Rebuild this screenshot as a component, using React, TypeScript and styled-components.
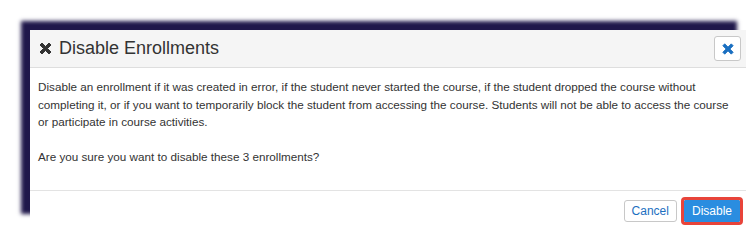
import React from "react";
import styled, { createGlobalStyle } from "styled-components";

const Global = createGlobalStyle`
  html, body { margin: 0; padding: 0; background: #ffffff; overflow: hidden; }
  body { font-family: "Liberation Sans", Arial, sans-serif; }
`;

const Stage = styled.div`
  width: 746px;
  height: 229px;
  padding: 30px 0 0 30px;
  box-sizing: border-box;
  overflow: hidden;
`;

const Panel = styled.div`
  width: 716px;
  height: 193px;
  background: #fff;
  box-shadow: -9px -9px 4px #1f174a;
  display: flex;
  flex-direction: column;
`;

const Header = styled.div`
  height: 37px;
  background: #f5f5f5;
  border-bottom: 1px solid #dedede;
  display: flex;
  align-items: center;
  justify-content: space-between;
  padding: 0 5px 0 8px;
`;

const Title = styled.h2`
  margin: 0;
  font-size: 18px;
  font-weight: normal;
  color: #333;
  display: flex;
  align-items: center;
  gap: 6px;
`;

const CloseButton = styled.button`
  width: 27px;
  height: 25px;
  border: 1px solid #c8c8c8;
  border-radius: 3px;
  background: #fff;
  display: flex;
  align-items: center;
  justify-content: center;
  padding: 0;
`;

const Body = styled.div`
  flex: 1;
  padding: 10px 8px 0 8px;
  font-size: 11.7px;
  line-height: 17.5px;
  color: #333;
`;

const Para = styled.p`
  margin: 0 0 17.5px 0;
  white-space: nowrap;
`;

const Footer = styled.div`
  height: 33px;
  box-sizing: border-box;
  border-top: 1px solid #e3e3e3;
  display: flex;
  justify-content: flex-end;
  align-items: flex-start;
  gap: 7px;
  padding: 9px 6px 0 0;
`;

const Button = styled.button<{ $primary?: boolean }>`
  height: 22px;
  padding: 0 ${(p) => (p.$primary ? "7px" : "7px")};
  font-family: "Liberation Sans", Arial, sans-serif;
  font-size: 12px;
  border-radius: ${(p) => (p.$primary ? "1px" : "3px")};
  border: 1px solid ${(p) => (p.$primary ? "#2a8de0" : "#c8c8c8")};
  background: ${(p) => (p.$primary ? "#2a8de0" : "#fff")};
  color: ${(p) => (p.$primary ? "#fff" : "#1d6fbf")};
  outline: ${(p) => (p.$primary ? "3px solid #e8443a" : "none")};
  outline-offset: 0;
`;

const TimesIcon = ({ size, color }: { size: number; color: string }) => (
  <svg width={size} height={size} viewBox="0 0 12 12">
    <path
      d="M1.6 3.2 L3.2 1.6 L6 4.4 L8.8 1.6 L10.4 3.2 L7.6 6 L10.4 8.8 L8.8 10.4 L6 7.6 L3.2 10.4 L1.6 8.8 L4.4 6 Z"
      fill={color}
      stroke={color}
      strokeWidth="0.8"
      strokeLinejoin="round"
    />
  </svg>
);

export default function App() {
  return (
    <>
      <Global />
      <Stage>
        <Panel>
          <Header>
            <Title>
              <TimesIcon size={15} color="#333" />
              Disable Enrollments
            </Title>
            <CloseButton aria-label="Close">
              <TimesIcon size={14} color="#1a6fc1" />
            </CloseButton>
          </Header>
          <Body>
            <Para>
              Disable an enrollment if it was created in error, if the student never started the course, if the student dropped the course without
              <br />
              completing it, or if you want to temporarily block the student from accessing the course. Students will not be able to access the course
              <br />
              or participate in course activities.
            </Para>
            <Para>Are you sure you want to disable these 3 enrollments?</Para>
          </Body>
          <Footer>
            <Button>Cancel</Button>
            <Button $primary>Disable</Button>
          </Footer>
        </Panel>
      </Stage>
    </>
  );
}
